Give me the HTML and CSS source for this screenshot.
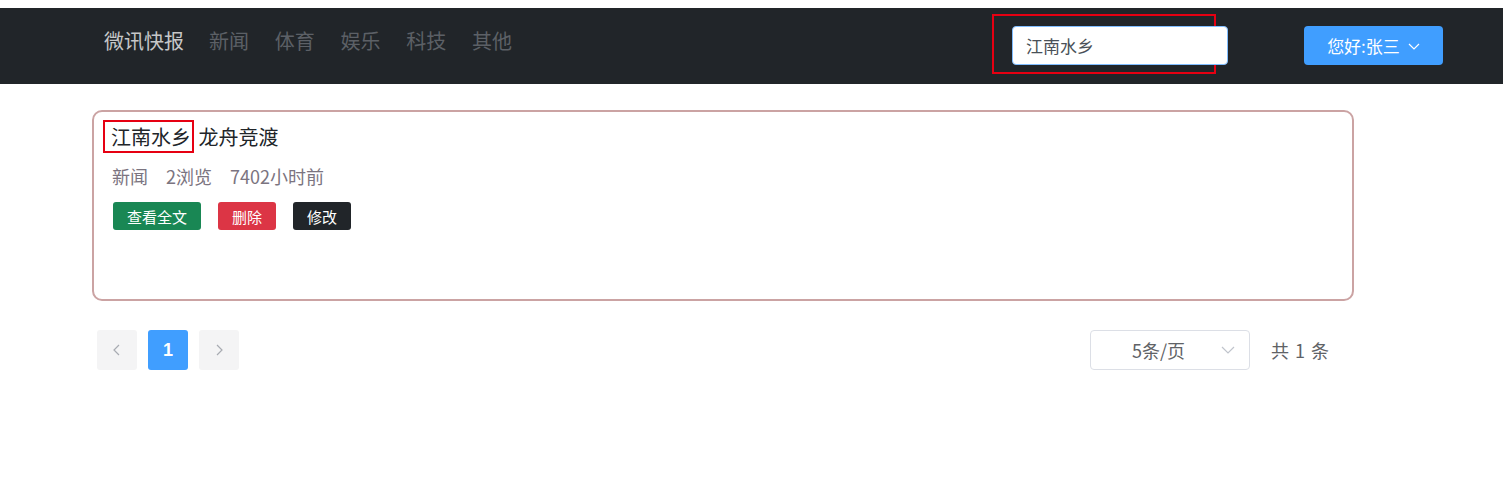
FILE: index.html
```html
<!DOCTYPE html>
<html lang="zh-CN">
<head>
    <meta charset="UTF-8">
    <meta name="viewport" content="width=device-width, initial-scale=1.0">
    <title>微讯快报</title>
    <link rel="stylesheet" href="styles.css">
</head>
<body>
    <nav class="navbar">
        <a class="brand" href="#">微讯快报</a>
        <ul class="nav-links">
            <li><a href="#">新闻</a></li>
            <li><a href="#">体育</a></li>
            <li><a href="#">娱乐</a></li>
            <li><a href="#">科技</a></li>
            <li><a href="#">其他</a></li>
        </ul>
        <div class="search-box">
            <input type="text" class="search-input" value="江南水乡">
        </div>
        <button class="user-btn">您好:张三
            <svg class="user-caret" width="12" height="12" viewBox="0 0 12 12"><path d="M1 4 L6 9 L11 4" fill="none" stroke="#fff" stroke-width="1.2"/></svg>
        </button>
    </nav>

    <main class="content">
        <!-- 新闻列表 -->
        <div class="news-card">
            <h3 class="news-title"><span class="hl">江南水乡</span> 龙舟竞渡</h3>
            <div class="news-meta">
                <span>新闻</span>
                <span>2浏览</span>
                <span>7402小时前</span>
            </div>
            <div class="news-actions">
                <button class="btn btn-green">查看全文</button>
                <button class="btn btn-red">删除</button>
                <button class="btn btn-dark">修改</button>
            </div>
        </div>

        <!-- 分页 -->
        <div class="pager">
            <div class="pager-left">
                <button class="page-btn">
                    <svg width="10" height="12" viewBox="0 0 10 12"><path d="M7 1 L2 6 L7 11" fill="none" stroke="#a8abb2" stroke-width="1.2"/></svg>
                </button>
                <button class="page-btn active">1</button>
                <button class="page-btn">
                    <svg width="10" height="12" viewBox="0 0 10 12"><path d="M3 1 L8 6 L3 11" fill="none" stroke="#a8abb2" stroke-width="1.2"/></svg>
                </button>
            </div>
            <div class="pager-right">
                <div class="size-select">
                    <span>5条/页</span>
                    <svg class="select-caret" width="14" height="10" viewBox="0 0 14 10"><path d="M1 2 L7 8 L13 2" fill="none" stroke="#c0c4cc" stroke-width="1.2"/></svg>
                </div>
                <span class="total">共 1 条</span>
            </div>
        </div>
    </main>
</body>
</html>
```

FILE: styles.css
```css
/* styles.css */

body {
    font-family: "Noto Sans CJK SC", "Liberation Sans", sans-serif;
    background-color: #fff;
    margin: 0;
    padding: 8px 0 0 0;
}

a {
    text-decoration: none;
}

.navbar {
    display: flex;
    align-items: flex-start;
    height: 76px;
    background-color: #212529;
    padding: 0 60px 0 104px;
}

.brand {
    font-size: 20px;
    line-height: 29px;
    margin-top: 18px;
    color: #c6c7c8;
    margin-right: 25px;
}

.nav-links {
    display: flex;
    gap: 25.75px;
    list-style: none;
    margin: 18px 0 0 0;
    padding: 0;
}

.nav-links a {
    font-size: 20px;
    line-height: 29px;
    color: #5c6066;
}

.search-box {
    margin: 6px 0 0 auto;
    box-sizing: border-box;
    width: 224px;
    height: 60px;
    border: 2px solid #e60012;
    padding: 10px 0 0 18px;
}

.search-input {
    box-sizing: border-box;
    width: 216px;
    height: 39px;
    border: 1px solid #80bdff;
    border-radius: 4px;
    padding: 0 13px;
    font-family: inherit;
    font-size: 17px;
    color: #495057;
    outline: none;
}

.user-btn {
    display: flex;
    align-items: center;
    gap: 8px;
    margin: 18px 0 0 88px;
    width: 139px;
    height: 39px;
    justify-content: center;
    background-color: #409eff;
    border: none;
    border-radius: 4px;
    color: #fff;
    font-family: inherit;
    font-size: 17px;
    padding: 0;
}

.content {
    padding: 26px 0 0 92px;
}

.news-card {
    box-sizing: border-box;
    width: 1262px;
    height: 191px;
    border: 2px solid #cba3a3;
    border-radius: 10px;
    padding: 8px 9px;
}

.news-title {
    margin: 0;
    font-size: 20px;
    font-weight: normal;
    color: #212529;
    line-height: 29px;
}

.hl {
    display: inline-block;
    border: 2px solid #e60012;
    padding: 0 1px 0 6px;
}

.news-meta {
    display: flex;
    gap: 18px;
    margin: 8px 0 0 9px;
    font-size: 18px;
    color: #7b7480;
    line-height: 30px;
}

.news-actions {
    display: flex;
    gap: 17px;
    margin: 11px 0 0 10px;
}

.btn {
    height: 28px;
    padding: 0 14px;
    border: none;
    border-radius: 3px;
    font-family: inherit;
    font-size: 15px;
    color: #fff;
}

.btn-green { background-color: #198754; }
.btn-red { background-color: #dc3545; }
.btn-dark { background-color: #212529; }

.pager {
    display: flex;
    justify-content: space-between;
    align-items: center;
    width: 1232px;
    margin: 29px 0 0 5px;
}

.pager-left {
    display: flex;
    gap: 11px;
}

.page-btn {
    width: 40px;
    height: 40px;
    display: flex;
    align-items: center;
    justify-content: center;
    background-color: #f4f4f5;
    border: none;
    border-radius: 3px;
    font-family: "Liberation Sans", sans-serif;
    font-size: 18px;
    font-weight: bold;
    color: #606266;
    padding: 0;
}

.page-btn.active {
    background-color: #409eff;
    color: #fff;
}

.pager-right {
    display: flex;
    align-items: center;
    gap: 21px;
}

.size-select {
    position: relative;
    box-sizing: border-box;
    width: 160px;
    height: 40px;
    border: 1px solid #dcdfe6;
    border-radius: 4px;
    display: flex;
    align-items: center;
    padding-left: 41px;
    font-size: 18px;
    color: #606266;
}

.select-caret {
    position: absolute;
    right: 14px;
    top: 14px;
}

.total {
    font-size: 18px;
    word-spacing: 2px;
    color: #606266;
}
```
